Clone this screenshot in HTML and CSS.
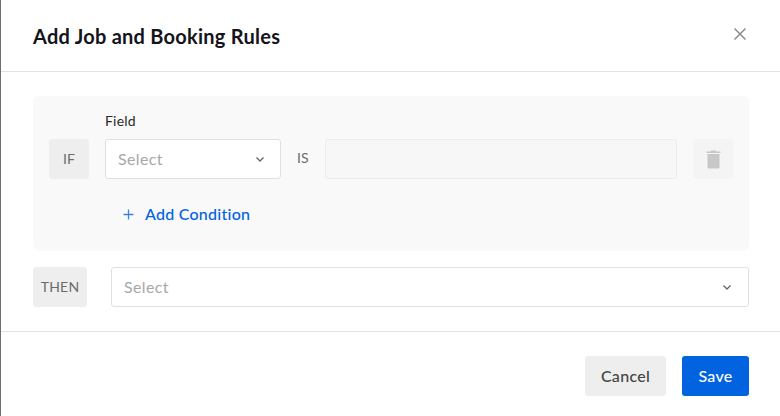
FILE: index.html
```html
<!DOCTYPE html>
<html lang="en">
<head>
  <meta charset="UTF-8">
  <title>Add Job and Booking Rules</title>
  <link rel="stylesheet" href="styles.css">
</head>
<body>
  <div class="modal">
    <div class="modal-header">
      <h2 class="modal-title">Add Job and Booking Rules</h2>
      <svg class="close-icon" width="12" height="12" viewBox="0 0 12 12"><path d="M0.5 0.5L11.5 11.5M11.5 0.5L0.5 11.5" stroke="#8a8a8a" stroke-width="1.5" fill="none"/></svg>
    </div>

    <div class="modal-body">
      <div class="rule-box">
        <div class="rule-row">
          <div class="tag tag-if">IF</div>
          <div class="field">
            <label class="field-label">Field</label>
            <div class="select select-field">
              <span class="select-text">Select</span>
              <svg width="8" height="5" viewBox="0 0 8 5"><path d="M0.5 0.5L4 4L7.500 0.500" stroke="#666" stroke-width="1.300" fill="none"/></svg>
            </div>
          </div>
          <div class="is-label">IS</div>
          <div class="value-input"></div>
          <div class="trash">
            <svg width="15" height="19" viewBox="0 0 15 19"><path d="M5 0.5H10L10.5 1.5H14.5V3H0.5V1.500H4.500Z M1.500 4H13.500V17C13.500 18 12.800 18.500 12 18.500H3C2.200 18.500 1.500 18 1.500 17Z" fill="#c8c8c8"/></svg>
          </div>
        </div>
        <a class="add-condition">
          <svg width="11" height="11" viewBox="0 0 11 11"><path d="M5.500 0.500V10.500M0.500 5.500H10.500" stroke="#3b82e0" stroke-width="1.300" fill="none"/></svg>
          <span>Add Condition</span>
        </a>
      </div>

      <div class="then-row">
        <div class="tag tag-then">THEN</div>
        <div class="select select-then">
          <span class="select-text">Select</span>
          <svg width="8" height="5" viewBox="0 0 8 5"><path d="M0.5 0.5L4 4L7.500 0.500" stroke="#666" stroke-width="1.300" fill="none"/></svg>
        </div>
      </div>
    </div>

    <div class="modal-footer">
      <button class="btn btn-cancel">Cancel</button>
      <button class="btn btn-save">Save</button>
    </div>
  </div>
</body>
</html>
```

FILE: styles.css
```css
body {
  margin: 0;
  font-family: Lato, "Noto Sans", Arial, sans-serif;
  background-color: #fff;
}

.modal {
  width: 780px;
  height: 416px;
  box-sizing: border-box;
  border-left: 1px solid #6e6e6e;
  background-color: #fff;
  overflow: hidden;
}

.modal-header {
  height: 72px;
  box-sizing: border-box;
  padding: 0 34px 0 32px;
  display: flex;
  align-items: center;
  justify-content: space-between;
  border-bottom: 1px solid #e2e2e2;
}

.modal-title {
  margin: 0;
  font-family: Lato, sans-serif;
  font-size: 20px;
  font-weight: 700;
  line-height: 24px;
  letter-spacing: 0.25px;
  color: #14141a;
}

.close-icon {
  margin-bottom: 4px;
}

.modal-body {
  padding: 24px 31px 24px 32px;
  border-bottom: 1px solid #e2e2e2;
}

.rule-box {
  height: 155px;
  box-sizing: border-box;
  padding: 16px;
  background-color: #f9f9f9;
  border-radius: 6px;
}

.rule-row {
  display: flex;
  align-items: flex-end;
}

.tag {
  height: 40px;
  box-sizing: border-box;
  padding-bottom: 2px;
  display: flex;
  align-items: center;
  justify-content: center;
  background-color: #eeeeee;
  border-radius: 3px;
  font-size: 14px;
  letter-spacing: 0.2px;
  color: #6b6b6b;
}

.tag-if {
  width: 40px;
  margin-right: 16px;
}

.tag-then {
  width: 54px;
  margin-right: 24px;
  flex-shrink: 0;
}

.field {
  display: flex;
  flex-direction: column;
}

.field-label {
  font-size: 14px;
  line-height: 18px;
  letter-spacing: 0.2px;
  color: #2a2a2a;
  margin-bottom: 9px;
}

.select {
  height: 40px;
  box-sizing: border-box;
  padding: 0 12px;
  display: flex;
  align-items: center;
  justify-content: space-between;
  background-color: #fff;
  border: 1px solid #e0e0e0;
  border-radius: 3px;
  font-size: 16px;
  color: #a8a8a8;
}

.select-text {
  letter-spacing: 0.35px;
  margin-top: -2px;
}

.select-field {
  width: 176px;
  padding-right: 16px;
}

.select-then {
  flex: 1;
  padding-right: 17px;
}

.is-label {
  width: 28px;
  margin-left: 16px;
  height: 40px;
  line-height: 38px;
  font-size: 14px;
  color: #6b6b6b;
}

.value-input {
  width: 352px;
  height: 40px;
  box-sizing: border-box;
  background-color: #f7f7f7;
  border: 1px solid #ececec;
  border-radius: 3px;
}

.trash {
  width: 40px;
  height: 40px;
  margin-left: 16px;
  display: flex;
  align-items: center;
  justify-content: center;
  background-color: #f4f4f4;
  border-radius: 3px;
}

.add-condition {
  margin: 23px 0 0 74px;
  display: flex;
  align-items: center;
  gap: 11px;
  font-size: 16px;
  line-height: 24px;
  font-weight: 500;
  letter-spacing: 0.25px;
  color: #0263e0;
}

.then-row {
  margin-top: 16px;
  display: flex;
}

.modal-footer {
  padding: 24px 31px 0 0;
  display: flex;
  justify-content: flex-end;
  gap: 16px;
}

.btn {
  height: 40px;
  padding: 0 0 2px;
  border: none;
  border-radius: 3px;
  font-family: inherit;
  font-size: 16px;
  font-weight: 500;
  letter-spacing: 0.3px;
}

.btn-cancel {
  width: 81px;
  background-color: #eeeeee;
  color: #444;
}

.btn-save {
  width: 67px;
  background-color: #0263e0;
  color: #fff;
}
```
